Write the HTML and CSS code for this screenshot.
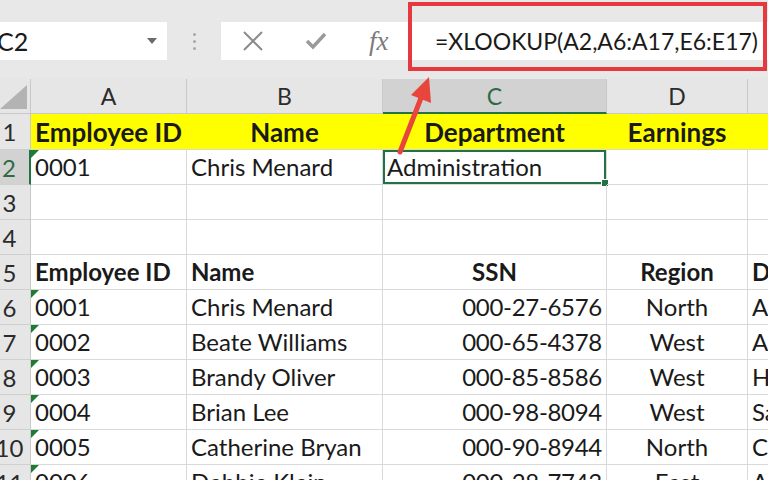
FILE: index.html
```html
<!DOCTYPE html>
<html lang="en">
<head>
<meta charset="UTF-8">
<title>XLOOKUP</title>
<link rel="stylesheet" href="styles.css">
</head>
<body>
<div class="app">

    <div class="toolbar">
        <div class="namebox">
            <span class="ref">C2</span>
            <span class="caret"></span>
        </div>
        <div class="grip"><i></i><i></i><i></i></div>
        <div class="formula">
            <div class="buttons">
                <svg class="btn" width="22" height="20" viewBox="0 0 22 20">
                    <path d="M2 1 L20 19 M20 1 L2 19" stroke="#8c8c8c" stroke-width="2" fill="none"/>
                </svg>
                <svg class="btn" width="22" height="18" viewBox="0 0 22 18">
                    <path d="M2 9 L8 15 L20 2" stroke="#9a9a9a" stroke-width="3.5" fill="none"/>
                </svg>
                <span class="fx">fx</span>
            </div>
            <div class="formula-text">=XLOOKUP(A2,A6:A17,E6:E17)</div>
        </div>
    </div>

    <div class="sheet">
        <div class="row head">
            <div class="corner"><span></span></div>
            <div class="col">A</div>
            <div class="col">B</div>
            <div class="col sel">C</div>
            <div class="col">D</div>
            <div class="col"></div>
        </div>

        <div class="row title">
            <div class="num">1</div>
            <div class="c bold big center">Employee ID</div>
            <div class="c bold big center">Name</div>
            <div class="c bold big center">Department</div>
            <div class="c bold big center">Earnings</div>
            <div class="c"></div>
        </div>

        <div class="row">
            <div class="num sel">2</div>
            <div class="c id">0001</div>
            <div class="c">Chris Menard</div>
            <div class="c active">Administration</div>
            <div class="c"></div>
            <div class="c"></div>
        </div>

        <div class="row">
            <div class="num">3</div>
            <div class="c"></div><div class="c"></div><div class="c"></div><div class="c"></div><div class="c"></div>
        </div>

        <div class="row">
            <div class="num">4</div>
            <div class="c"></div><div class="c"></div><div class="c"></div><div class="c"></div><div class="c"></div>
        </div>

        <div class="row">
            <div class="num">5</div>
            <div class="c bold">Employee ID</div>
            <div class="c bold">Name</div>
            <div class="c bold center">SSN</div>
            <div class="c bold center">Region</div>
            <div class="c bold">Department</div>
        </div>

        <div class="row">
            <div class="num">6</div>
            <div class="c id">0001</div>
            <div class="c">Chris Menard</div>
            <div class="c right">000-27-6576</div>
            <div class="c center">North</div>
            <div class="c">Administration</div>
        </div>

        <div class="row">
            <div class="num">7</div>
            <div class="c id">0002</div>
            <div class="c">Beate Williams</div>
            <div class="c right">000-65-4378</div>
            <div class="c center">West</div>
            <div class="c">Accounting</div>
        </div>

        <div class="row">
            <div class="num">8</div>
            <div class="c id">0003</div>
            <div class="c">Brandy Oliver</div>
            <div class="c right">000-85-8586</div>
            <div class="c center">West</div>
            <div class="c">Human Resources</div>
        </div>

        <div class="row">
            <div class="num">9</div>
            <div class="c id">0004</div>
            <div class="c">Brian Lee</div>
            <div class="c right">000-98-8094</div>
            <div class="c center">West</div>
            <div class="c">Sales</div>
        </div>

        <div class="row">
            <div class="num">10</div>
            <div class="c id">0005</div>
            <div class="c">Catherine Bryan</div>
            <div class="c right">000-90-8944</div>
            <div class="c center">North</div>
            <div class="c">Customer Service</div>
        </div>

        <div class="row">
            <div class="num">11</div>
            <div class="c id">0006</div>
            <div class="c">Debbie Klein</div>
            <div class="c right">000-28-7743</div>
            <div class="c center">East</div>
            <div class="c">Administration</div>
        </div>
    </div>

    <!-- red callout around the formula -->
    <div class="callout"></div>
    <svg class="arrow" width="768" height="480" viewBox="0 0 768 480">
        <line x1="400" y1="152" x2="421" y2="98" stroke="#e8453c" stroke-width="5" stroke-linecap="round"/>
        <polygon points="429,77 411,95 431,103" fill="#e8453c"/>
    </svg>

</div>
</body>
</html>
```

FILE: styles.css
```css
body {
    margin: 0;
    font-family: Lato, "Open Sans", sans-serif;
    color: #1a1a1a;
    background: #fff;
}

.app {
    position: relative;
    width: 768px;
    height: 480px;
    overflow: hidden;
}

/* formula bar */
.toolbar {
    height: 79px;
    background: #e8e8e8;
    display: flex;
    align-items: flex-start;
    padding-top: 22px;
    box-sizing: border-box;
}

.namebox {
    flex: 0 0 167px;
    height: 38px;
    background: #fff;
    display: flex;
    align-items: center;
    justify-content: space-between;
    padding-right: 10px;
    box-sizing: border-box;
}

.namebox .ref {
    font-size: 25px;
    margin-left: -3px;
}

.caret {
    width: 0;
    height: 0;
    border-left: 5px solid transparent;
    border-right: 5px solid transparent;
    border-top: 6px solid #6a6a6a;
}

.grip {
    flex: 0 0 54px;
    height: 38px;
    display: flex;
    flex-direction: column;
    align-items: center;
    justify-content: center;
    gap: 4px;
}

.grip i {
    width: 3px;
    height: 3px;
    border-radius: 50%;
    background: #a8a8a8;
}

.formula {
    flex: 1;
    min-width: 0;
    height: 38px;
    background: #fff;
    display: flex;
    align-items: center;
    overflow: hidden;
}

.buttons {
    flex: 0 0 214px;
    display: flex;
    align-items: center;
    gap: 41px;
    padding-left: 21px;
    box-sizing: border-box;
}

.fx {
    font-family: "Liberation Serif", serif;
    font-style: italic;
    font-size: 27px;
    color: #7c7c7c;
    margin-left: 1px;
}

.formula-text {
    font-size: 23px;
    color: #1a1a1a;
    white-space: nowrap;
}

/* grid */
.row {
    display: grid;
    grid-template-columns: 31px 156px 196px 224px 141px 140px;
    height: 35px;
}

.row > div {
    box-sizing: border-box;
    border-right: 1px solid #d9d9d9;
    border-bottom: 1px solid #d9d9d9;
    position: relative;
    white-space: nowrap;
    overflow: hidden;
}

.head > div {
    background: #e6e6e6;
    border-right-color: #c9c9c9;
    border-bottom-color: #c9c9c9;
    font-size: 23px;
    color: #2b2b2b;
    display: flex;
    align-items: center;
    justify-content: center;
}

.head .sel {
    background: #d2d2d2;
    color: #2f6b45;
    border-bottom: 2px solid #217346;
}

.corner span {
    position: absolute;
    right: 3px;
    bottom: 4px;
    width: 0;
    height: 0;
    border-left: 27px solid transparent;
    border-bottom: 24px solid #b3b3b3;
}

.num {
    background: #e6e6e6;
    border-bottom-color: #cfcfcf !important;
    border-right-color: #c9c9c9 !important;
    font-size: 24px;
    color: #2b2b2b;
    display: flex;
    align-items: center;
    justify-content: center;
    padding-right: 11px;
}

.num.sel {
    background: #d2d2d2;
    color: #2f6b45;
    border-right: 2px solid #217346 !important;
}

.c {
    font-size: 24px;
    line-height: 34px;
    padding: 0 4px;
}

.title {
    height: 36px;
}

.title .c {
    background: #ffff00;
    border-right-color: #ffff00;
    line-height: 36px;
}

.bold { font-weight: bold; }
.big { font-size: 26px; }
.center { text-align: center; }
.right { text-align: right; letter-spacing: -0.3px; }

/* green error triangle for numbers stored as text */
.id::before {
    content: "";
    position: absolute;
    left: 0;
    top: 0;
    border-top: 8px solid #1e7b34;
    border-right: 8px solid transparent;
}

.active {
    box-shadow: inset 0 0 0 2px #217346;
    overflow: visible !important;
}

.active::after {
    content: "";
    position: absolute;
    right: -3px;
    bottom: -3px;
    width: 6px;
    height: 6px;
    background: #217346;
    border: 1px solid #fff;
}

/* callout */
.callout {
    position: absolute;
    left: 408px;
    top: 2px;
    width: 359px;
    height: 69px;
    border: 4px solid #e5393f;
    box-sizing: border-box;
}

.arrow {
    position: absolute;
    left: 0;
    top: 0;
    pointer-events: none;
}
```
